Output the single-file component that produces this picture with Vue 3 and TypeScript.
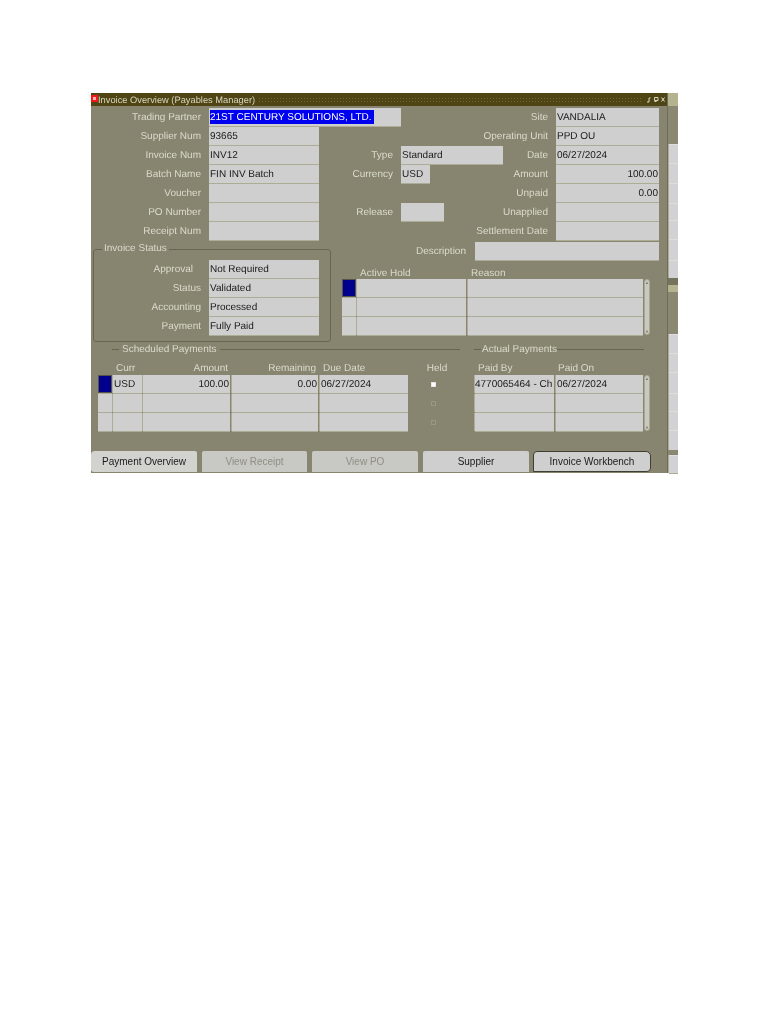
<script setup lang="ts">
interface Field { label: string; value?: string; num?: boolean; cls: string; lcls: string }
const fields: Field[] = [
  { label: 'Supplier Num', value: '93665', lcls: 'l1 r2', cls: 'f1 r2' },
  { label: 'Invoice Num', value: 'INV12', lcls: 'l1 r3', cls: 'f1 r3' },
  { label: 'Batch Name', value: 'FIN INV Batch', lcls: 'l1 r4', cls: 'f1 r4' },
  { label: 'Voucher', lcls: 'l1 r5', cls: 'f1 r5' },
  { label: 'PO Number', lcls: 'l1 r6', cls: 'f1 r6' },
  { label: 'Receipt Num', lcls: 'l1 r7', cls: 'f1 r7' },
  { label: 'Type', value: 'Standard', lcls: 'l2 r3', cls: 'f2 r3' },
  { label: 'Currency', value: 'USD', lcls: 'l2 r4', cls: 'f2 r4 w29' },
  { label: 'Release', lcls: 'l2 r6', cls: 'f2 r6 w43' },
  { label: 'Site', value: 'VANDALIA', lcls: 'l3 r1', cls: 'f3 r1' },
  { label: 'Operating Unit', value: 'PPD OU', lcls: 'l3 r2', cls: 'f3 r2' },
  { label: 'Date', value: '06/27/2024', lcls: 'l3 r3', cls: 'f3 r3' },
  { label: 'Amount', value: '100.00', num: true, lcls: 'l3 r4', cls: 'f3 r4' },
  { label: 'Unpaid', value: '0.00', num: true, lcls: 'l3 r5', cls: 'f3 r5' },
  { label: 'Unapplied', lcls: 'l3 r6', cls: 'f3 r6' },
  { label: 'Settlement Date', lcls: 'l3 r7', cls: 'f3 r7' },
]
const statuses = [
  { label: 'Approval', value: 'Not Required', inset: true },
  { label: 'Status', value: 'Validated', inset: false },
  { label: 'Accounting', value: 'Processed', inset: false },
  { label: 'Payment', value: 'Fully Paid', inset: false },
]
const scheduled = [
  { curr: 'USD', amount: '100.00', remaining: '0.00', due: '06/27/2024', on: true },
  { curr: '', amount: '', remaining: '', due: '', on: false },
  { curr: '', amount: '', remaining: '', due: '', on: false },
]
const actual = [
  { by: '4770065464 - Ch', paid: '06/27/2024' },
  { by: '', paid: '' },
  { by: '', paid: '' },
]
const strip = [
  { h: 13, k: 'pale' }, { h: 38, k: 'olive' },
  { h: 19, k: 'cell' }, { h: 20, k: 'cell' }, { h: 20, k: 'cell' }, { h: 17, k: 'cell' },
  { h: 19, k: 'cell' }, { h: 21, k: 'cell' }, { h: 18, k: 'cell' },
  { h: 7, k: 'dark' }, { h: 7, k: 'pale' }, { h: 42, k: 'olive' },
  { h: 19, k: 'cell' }, { h: 19, k: 'cell' }, { h: 21, k: 'cell' }, { h: 18, k: 'cell' },
  { h: 19, k: 'cell' }, { h: 20, k: 'cell' }, { h: 5, k: 'olive' }, { h: 18, k: 'cell' },
]
</script>

<template>
  <div class="page">
    <div class="shot">
      <section class="win">
        <header class="title">
          <span class="logo"></span>
          <span class="title-text">Invoice Overview (Payables Manager)</span>
          <span class="dots"></span>
          <span class="ctl">
            <svg width="20" height="7" viewBox="0 0 20 7" aria-hidden="true">
              <path d="M1 6h2M3 6V2M3 2h1.500" stroke="#d8d6c0" stroke-width="1" fill="none" />
              <path d="M8.500 1.500h3.500v3h-3.500zM8.500 5.500h2" stroke="#d8d6c0" stroke-width="1" fill="none" />
              <path d="M15.500 1.500l3 4M18.500 1.500l-3 4" stroke="#e6e4d2" stroke-width="1" fill="none" />
            </svg>
          </span>
        </header>

        <div class="form">
          <span class="lab l1 r1">Trading Partner</span>
          <div class="fld tp"><span class="sel">21ST CENTURY SOLUTIONS, LTD.</span></div>
          <template v-for="f in fields" :key="f.label">
            <span class="lab" :class="f.lcls">{{ f.label }}</span>
            <div class="fld" :class="[f.cls, { num: f.num }]">{{ f.value }}</div>
          </template>
        </div>

        <div class="mid">
          <fieldset class="status">
            <legend>Invoice Status</legend>
            <div v-for="s in statuses" :key="s.label" class="srow">
              <span class="lab" :class="{ inset: s.inset }">{{ s.label }}</span>
              <div class="fld sval">{{ s.value }}</div>
            </div>
          </fieldset>

          <div class="holds">
            <div class="desc">
              <span class="lab">Description</span>
              <div class="fld dval"></div>
            </div>
            <div class="hhead">
              <span class="h-hold">Active Hold</span>
              <span>Reason</span>
            </div>
            <div class="htable">
              <div class="hcols">
                <div v-for="n in 3" :key="n" class="hrow">
                  <i class="ind" :class="{ cur: n === 1 }"></i>
                  <div class="cell hc1"></div>
                  <div class="cell hc2"></div>
                </div>
              </div>
              <div class="sb"><b>▲</b><b>▼</b></div>
            </div>
          </div>
        </div>

        <div class="sections">
          <div class="sec sec-a"><i class="dash"></i><span>Scheduled Payments</span><i class="rule"></i></div>
          <div class="sec sec-b"><i class="dash"></i><span>Actual Payments</span><i class="rule"></i></div>
        </div>

        <div class="pay">
          <div class="sched">
            <div class="thead">
              <span class="c-curr">Curr</span>
              <span class="c-amt">Amount</span>
              <span class="c-rem">Remaining</span>
              <span class="c-due">Due Date</span>
            </div>
            <div v-for="(r, i) in scheduled" :key="i" class="trow">
              <i class="ind" :class="{ cur: i === 0 }"></i>
              <div class="cell t1">{{ r.curr }}</div>
              <div class="cell t2 num">{{ r.amount }}</div>
              <div class="cell t3 num">{{ r.remaining }}</div>
              <div class="cell t4">{{ r.due }}</div>
            </div>
          </div>
          <div class="held">
            <span class="hl">Held</span>
            <div v-for="(r, i) in scheduled" :key="i" class="chk"><i :class="{ on: r.on }"></i></div>
          </div>
          <div class="act">
            <div class="thead">
              <span class="c-by">Paid By</span>
              <span>Paid On</span>
            </div>
            <div class="atable">
              <div>
                <div v-for="(r, i) in actual" :key="i" class="trow">
                  <div class="cell a1">{{ r.by }}</div>
                  <div class="cell a2">{{ r.paid }}</div>
                </div>
              </div>
              <div class="sb"><b>▲</b><b>▼</b></div>
            </div>
          </div>
        </div>

        <footer class="btns">
          <button type="button" class="btn b-pay">Payment Overview</button>
          <button type="button" class="btn off w105" disabled>View Receipt</button>
          <button type="button" class="btn off" disabled>View PO</button>
          <button type="button" class="btn">Supplier</button>
          <button type="button" class="btn def">Invoice Workbench</button>
        </footer>
      </section>
      <aside class="strip">
        <i v-for="(s, i) in strip" :key="i" :class="s.k" :style="{ height: s.h + 'px' }"></i>
      </aside>
    </div>
  </div>
</template>

<style>
html, body { margin: 0; background: #fff; }
</style>

<style scoped>
.page { width: 768px; height: 1024px; padding: 93px 0 0 91px; box-sizing: border-box; background: #fff; overflow: hidden; font: 10px "Liberation Sans", Arial, sans-serif; text-rendering: geometricPrecision; }
.shot { display: flex; width: 587px; height: 380px; filter: blur(0.5px); }
.win { width: 576px; height: 380px; background: #878570; overflow: hidden; flex: none; }
.strip { flex: 1; display: flex; flex-direction: column; border-left: 1px solid #6f6d58; }
.strip i { display: block; flex: none; box-sizing: border-box; }
.strip .pale { background: #b3b38f; }
.strip .olive { background: #8a8873; }
.strip .dark { background: #75735d; }
.strip .cell { background: #d2d2d5; border-top: 1px solid #dedede; }

.title { height: 13px; background: #4f4413; display: flex; align-items: center; color: #d9d7c3; font-size: 9.3px; }
.logo { width: 7px; height: 7px; margin: 0 0 2px 0; background: #ffb4b4; border: 2px solid #f01818; box-sizing: border-box; flex: none; }
.title-text { white-space: nowrap; }
.dots { flex: 1; height: 5px; margin: 0 3px; background-image: radial-gradient(#6f6638 40%, transparent 45%); background-size: 3px 3px; }
.ctl { display: flex; margin-right: 1px; }

.lab { color: #dcdbcc; white-space: nowrap; text-align: right; padding-right: 8px; line-height: 20px; height: 18px; }
.fld { background: #cfcfcf; color: #1a1a1a; height: 18px; line-height: 20px; padding: 0 1px; box-sizing: border-box; white-space: nowrap; overflow: hidden; box-shadow: 0 1px 0 #adac97; }
.num { text-align: right; }

.form { display: grid; grid-template-columns: 118px 110px 82px 102px 53px 103px; grid-auto-rows: 19px; margin-top: 2px; }
.r1 { grid-row: 1; } .r2 { grid-row: 2; } .r3 { grid-row: 3; } .r4 { grid-row: 4; }
.r5 { grid-row: 5; } .r6 { grid-row: 6; } .r7 { grid-row: 7; }
.l1 { grid-column: 1; } .f1 { grid-column: 2; }
.l2 { grid-column: 3; } .f2 { grid-column: 4; }
.l3 { grid-column: 3 / 6; } .f3 { grid-column: 6; }
.w29 { width: 29px; } .w43 { width: 43px; }
.tp { grid-column: 2 / 4; grid-row: 1; }
.sel { display: block; background: #0000f0; color: #fff; height: 14px; line-height: 15px; width: 164px; margin-top: 2px; white-space: nowrap; }

.mid { display: flex; height: 102px; }
.status { width: 238px; height: 100px; margin: 1px 0 0 2px; padding: 0; box-sizing: border-box; border: 1px solid #67654f; border-radius: 3px; flex: none; display: block; }
.status legend { color: #dcdbcc; margin-left: 8px; padding: 0 2px; line-height: 14px; }
.srow { display: flex; height: 19px; justify-content: flex-end; margin-right: 11px; }
.srow:first-of-type { margin-top: 4px; }
.srow .lab.inset { padding-right: 16px; }
.sval { width: 110px; flex: none; }

.holds { margin-left: 11px; width: 317px; }
.desc { display: flex; justify-content: flex-end; align-items: center; height: 19px; }
.desc .lab { padding-right: 9px; }
.dval { width: 184px; }
.hhead { display: flex; color: #dcdbcc; height: 19px; line-height: 27px; }
.h-hold { margin-left: 18px; width: 111px; }
.htable { display: flex; }
.hrow { display: flex; height: 19px; }
.ind { display: block; width: 14px; height: 18px; background: #cfcfcf; flex: none; box-shadow: 0 1px 0 #adac97; }
.ind.cur { background: #00008c; border: 1px solid #55544a; box-sizing: border-box; }
.cell { background: #cfcfcf; color: #1a1a1a; height: 18px; line-height: 20px; padding: 0 1px; box-sizing: border-box; margin-left: 1px; white-space: nowrap; overflow: hidden; flex: none; box-shadow: 0 1px 0 #adac97, -1px 0 0 #adac97; }
.hc1 { width: 109px; }
.hc2 { width: 175px; margin-left: 2px; }
.sb { width: 6px; height: 56px; margin-left: 1px; background: #c9c9c4; box-sizing: border-box; border: 1px solid #aaa990; border-radius: 3px; display: flex; flex-direction: column; justify-content: space-between; align-items: center; overflow: hidden; }
.sb b { font-size: 4px; line-height: 5px; color: #77766a; font-weight: normal; }

.sections { display: flex; height: 13px; align-items: center; color: #dcdbcc; }
.sec { display: flex; align-items: center; }
.sec-a { margin-left: 21px; width: 348px; }
.sec-b { margin-left: 14px; width: 170px; }
.sec .dash { display: block; width: 7px; height: 1px; background: #67654f; flex: none; margin-right: 3px; }
.sec .rule { display: block; flex: 1; height: 1px; background: #67654f; margin-left: 3px; }
.sec-b .rule { margin-left: 0; }
.sec-b .dash { margin-right: 1px; }

.pay { display: flex; margin-top: 4px; color: #dcdbcc; }
.thead { display: flex; height: 15px; line-height: 17px; white-space: nowrap; }
.sched { margin-left: 7px; width: 310px; }
.trow { display: flex; height: 19px; }
.t1 { width: 29px; }
.t2 { width: 87px; margin-left: 1px; }
.t3 { width: 86px; margin-left: 2px; }
.t4 { width: 88px; margin-left: 2px; }
.c-curr { margin-left: 18px; width: 20px; }
.c-amt { width: 92px; text-align: right; }
.c-rem { width: 88px; text-align: right; }
.c-due { margin-left: 7px; }
.held { width: 50px; text-align: center; }
.hl { display: block; height: 15px; line-height: 17px; padding-left: 8px; }
.chk { height: 19px; display: flex; align-items: center; justify-content: center; }
.chk i { display: block; width: 5px; height: 5px; border: 1px solid #9a9980; box-sizing: border-box; margin-bottom: 1px; }
.chk i.on { background: #fff; border-color: #e6e6e6; }
.act { width: 176px; margin-left: 17px; }
.c-by { margin-left: 3px; width: 80px; }
.atable { display: flex; }
.a1 { width: 79px; margin-left: 0; padding: 0; }
.a2 { width: 87px; margin-left: 2px; }

.btns { display: flex; gap: 5px; margin-top: 19px; }
.btn { font: inherit; height: 21px; width: 106px; padding: 0; margin: 0; background: #cfcfcf; color: #1a1a1a; border: none; border-radius: 2px 2px 0 0; flex: none; }
.b-pay { border-radius: 4px 2px 0 3px; background: #d2d2cf; }
.off { color: #8f8f85; background: #c8c8c4; }
.w105 { width: 105px; }
.def { width: 118px; margin-left: -1px; border: 1px solid #3f3e32; border-radius: 4px 5px 4px 0; }
</style>
